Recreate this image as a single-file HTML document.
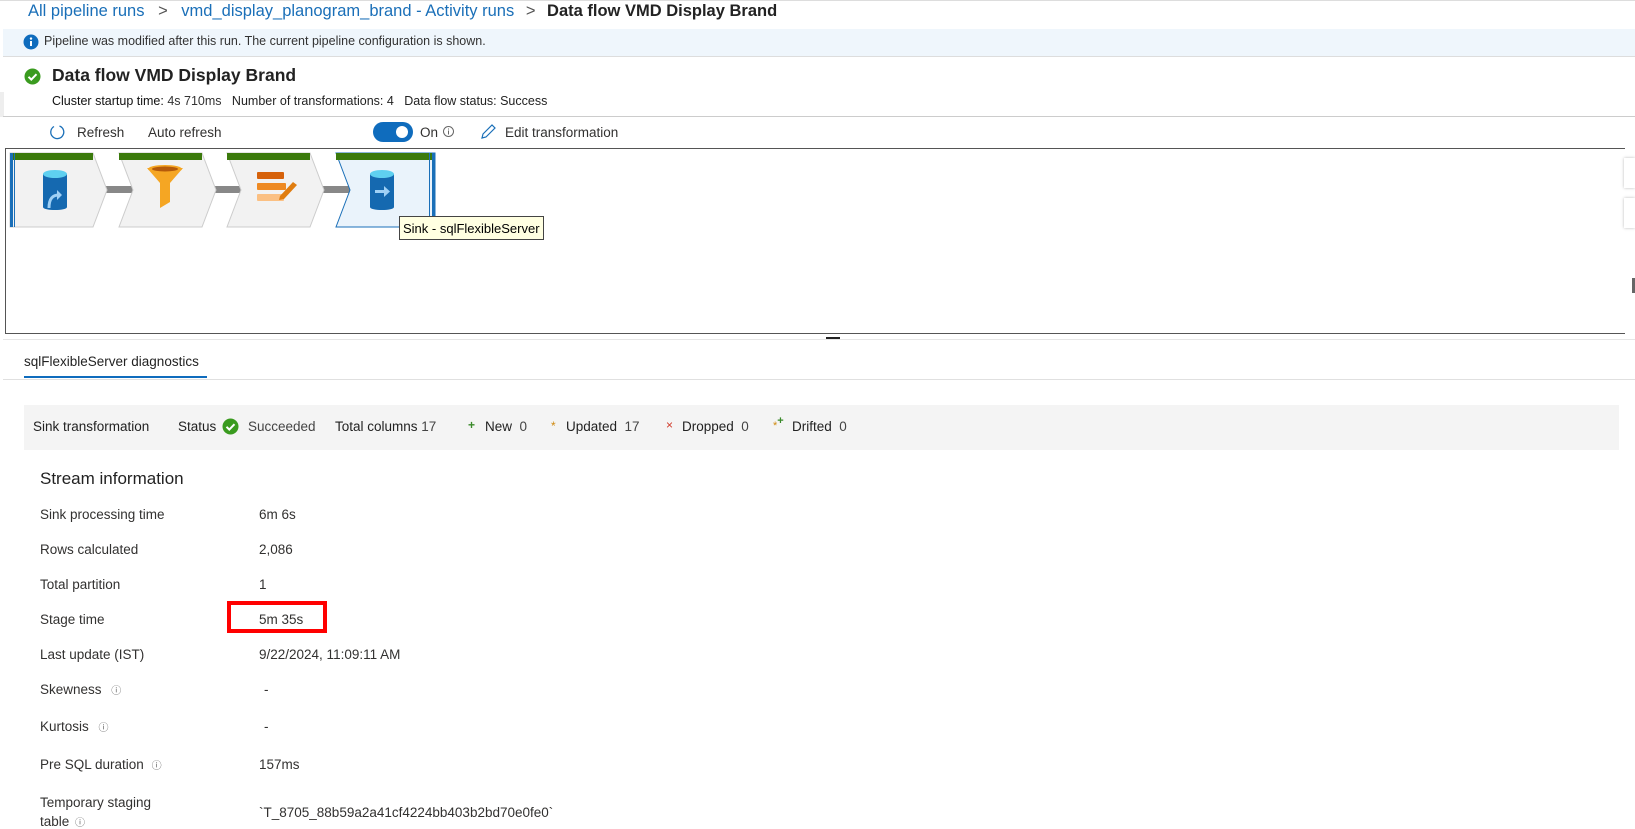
<!DOCTYPE html>
<html><head><meta charset="utf-8"><style>
*{margin:0;padding:0;box-sizing:border-box}
body{width:1635px;height:828px;overflow:hidden;background:#fff;font-family:"Liberation Sans","DejaVu Sans",sans-serif;color:#323130;position:relative}
.a{position:absolute;white-space:nowrap}
.lbl{position:absolute;left:40px;font-size:13.5px;color:#323130}
.val{position:absolute;left:259px;font-size:13.5px;color:#323130}
</style></head><body>
<div class="a" style="left:0;top:0;width:1635px;height:1px;background:#ddd"></div>
<div class="a" style="left:28px;top:2px;font-size:16.5px;color:#1a6fb8">All pipeline runs <span style="color:#555;margin:0 9px">&gt;</span> vmd_display_planogram_brand - Activity runs <span style="color:#555;margin:0 7px">&gt;</span> <span style="color:#222;font-weight:bold">Data flow VMD Display Brand</span></div>
<div class="a" style="left:3px;top:29px;width:1632px;height:27px;background:#eff6fc"></div>
<svg class="a" style="left:23px;top:34px" width="16" height="16"><circle cx="8" cy="8" r="7.5" fill="#0f6cbd"/><rect x="7" y="7" width="2" height="5" fill="#fff"/><circle cx="8" cy="4.6" r="1.2" fill="#fff"/></svg>
<div class="a" style="left:44px;top:34px;font-size:12.5px;color:#333">Pipeline was modified after this run. The current pipeline configuration is shown.</div>
<div class="a" style="left:3px;top:56px;width:1632px;height:1px;background:#ddd"></div>
<div class="a" style="left:0;top:92px;width:4px;height:25px;background:#eee"></div>
<svg class="a" style="left:24px;top:68px" width="17" height="17"><circle cx="8.5" cy="8.5" r="8" fill="#3a9b1f"/><path d="M4.5 8.8l2.8 2.8 5.2-5.4" stroke="#fff" stroke-width="2" fill="none"/></svg>
<div class="a" style="left:52px;top:65px;font-size:17.5px;font-weight:bold;color:#222">Data flow VMD Display Brand</div>
<div class="a" style="left:52px;top:94px;font-size:12.5px;color:#222"><b style="font-weight:normal;color:#111">Cluster startup time:</b><span style="color:#333"> 4s 710ms</span>&nbsp;&nbsp;&nbsp;Number of transformations: 4&nbsp;&nbsp;&nbsp;Data flow status: Success</div>
<div class="a" style="left:3px;top:116px;width:1632px;height:1px;background:#ccc"></div>
<svg class="a" style="left:49px;top:124px" width="16" height="16"><path d="M5 2.5A6.5 6.5 0 1 0 10.5 2" stroke="#1a6fb8" stroke-width="1.3" fill="none"/></svg>
<div class="a" style="left:77px;top:125px;font-size:13.5px">Refresh</div>
<div class="a" style="left:148px;top:125px;font-size:13.5px">Auto refresh</div>
<div class="a" style="left:373px;top:122px;width:40px;height:20px;border-radius:10px;background:#0f6cbd"></div>
<div class="a" style="left:396px;top:126px;width:12px;height:12px;border-radius:6px;background:#fff"></div>
<div class="a" style="left:420px;top:125px;font-size:13.5px">On</div>
<svg class="a" style="left:443px;top:126px" width="11" height="11"><circle cx="5.5" cy="5.5" r="5" stroke="#666" fill="none"/><rect x="5" y="4.5" width="1" height="4" fill="#666"/><rect x="5" y="2.5" width="1" height="1" fill="#666"/></svg>
<svg class="a" style="left:479px;top:123px" width="18" height="18"><path d="M3 15l1-4L13 2l3 3-9 9z" stroke="#1a6fb8" stroke-width="1.2" fill="none"/></svg>
<div class="a" style="left:505px;top:125px;font-size:13.5px">Edit transformation</div>
<div class="a" style="left:5px;top:148px;width:1620px;height:186px;border:1.5px solid #555;border-right:none"></div>
<svg class="a" style="left:6px;top:150px" width="440" height="85">
<rect x="99" y="36" width="30" height="7" fill="#888"/><rect x="208" y="36" width="30" height="7" fill="#888"/><rect x="317" y="36" width="30" height="7" fill="#888"/>
<path d="M4 3h83l14 37-14 37H4z" fill="#f2f2f2" stroke="#ccc"/>
<path d="M113 3h83l14 37-14 37h-83l14-37z" fill="#f2f2f2" stroke="#ccc"/>
<path d="M221 3h83l14 37-14 37h-83l14-37z" fill="#f2f2f2" stroke="#ccc"/>
<path d="M330 3h99v74h-99l14-37z" fill="#eaf3fb" stroke="#1a6fb8"/>
<rect x="4" y="3" width="83" height="7" fill="#3b7a0c"/><rect x="113" y="3" width="83" height="7" fill="#3b7a0c"/><rect x="221" y="3" width="83" height="7" fill="#3b7a0c"/><rect x="330" y="3" width="99" height="7" fill="#3b7a0c"/>
<rect x="4" y="3" width="3" height="74" fill="#1a6fb8"/><rect x="8" y="3" width="1" height="74" fill="#1a6fb8"/>
<rect x="426" y="3" width="3" height="74" fill="#1a6fb8"/><rect x="423" y="3" width="1" height="74" fill="#1a6fb8"/>
<path d="M37 24v33c0 4 24 4 24 0V24z" fill="#1569b0"/><ellipse cx="49" cy="24" rx="12" ry="4" fill="#5fd0f0"/>
<path d="M43 58c0-10 4-13 10-13" stroke="#9fd0f5" stroke-width="3" fill="none"/><path d="M51 40l5 5-5 5z" fill="#9fd0f5"/>
<path d="M141 18h36l-13 15v19l-10 6V33z" fill="#f5a623"/><ellipse cx="159" cy="19" rx="17" ry="4" fill="#f5a623"/><ellipse cx="159" cy="19" rx="13" ry="2.5" fill="#b55a0a"/>
<rect x="251" y="22" width="27" height="7" rx="1" fill="#d6620b"/><rect x="251" y="33" width="29" height="7" rx="1" fill="#ee8a23"/><rect x="251" y="44" width="27" height="7" rx="1" fill="#fbc083"/>
<path d="M274 46l13-14 4 3-13 14-5 1z" fill="#e07d10"/>
<path d="M364 24v33c0 4 24 4 24 0V24z" fill="#1569b0"/><ellipse cx="376" cy="24" rx="12" ry="4" fill="#5fd0f0"/>
<rect x="369" y="40" width="10" height="3" fill="#9fd0f5"/><path d="M378 36l6 5.5-6 5.5z" fill="#9fd0f5"/>
</svg>
<div class="a" style="left:399px;top:216px;width:145px;height:24px;background:#ffffe1;border:1px solid #444;font-size:13px;padding:4px 3px;color:#000">Sink - sqlFlexibleServer</div>
<div class="a" style="left:1624px;top:158px;width:11px;height:30px;background:#fff;box-shadow:0 0 3px #bbb"></div>
<div class="a" style="left:1624px;top:198px;width:11px;height:30px;background:#fff;box-shadow:0 0 3px #bbb"></div>
<div class="a" style="left:1632px;top:278px;width:4px;height:15px;border:2px solid #666"></div>
<div class="a" style="left:826px;top:337px;width:14px;height:2px;background:#222"></div>
<div class="a" style="left:3px;top:339px;width:1632px;height:1px;background:#e6e6e6"></div>
<div class="a" style="left:24px;top:354px;font-size:13.5px;color:#222">sqlFlexibleServer diagnostics</div>
<div class="a" style="left:24px;top:376px;width:183px;height:2px;background:#0f6cbd"></div>
<div class="a" style="left:3px;top:379px;width:1632px;height:1px;background:#e0e0e0"></div>
<div class="a" style="left:24px;top:405px;width:1595px;height:45px;background:#f4f4f4"></div>
<div class="a" style="left:33px;top:419px;font-size:13.5px;color:#222">Sink transformation</div>
<div class="a" style="left:178px;top:419px;font-size:13.5px;color:#222">Status</div>
<svg class="a" style="left:222px;top:418px" width="17" height="17"><circle cx="8.5" cy="8.5" r="8" fill="#3a9b1f"/><path d="M4.5 8.8l2.8 2.8 5.2-5.4" stroke="#fff" stroke-width="2" fill="none"/></svg>
<div class="a" style="left:248px;top:419px;font-size:13.5px;color:#444">Succeeded</div>
<div class="a" style="left:335px;top:419px;font-size:13.5px;color:#222">Total columns <span style="color:#444">17</span></div>
<div class="a" style="left:468px;top:418px;font-size:12px;color:#3a8a2a;font-weight:bold">+</div>
<div class="a" style="left:485px;top:419px;font-size:13.5px;color:#222">New <span style="color:#444">&nbsp;0</span></div>
<div class="a" style="left:551px;top:419px;font-size:12px;color:#d08a10">*</div>
<div class="a" style="left:566px;top:419px;font-size:13.5px;color:#222">Updated <span style="color:#444">&nbsp;17</span></div>
<div class="a" style="left:666px;top:418px;font-size:12px;color:#d03a2a">×</div>
<div class="a" style="left:682px;top:419px;font-size:13.5px;color:#222">Dropped <span style="color:#444">&nbsp;0</span></div>
<div class="a" style="left:773px;top:420px;font-size:11px;color:#d08a10">*<span style="color:#3a8a2a;font-weight:bold;position:relative;top:-5px">+</span></div>
<div class="a" style="left:792px;top:419px;font-size:13.5px;color:#222">Drifted <span style="color:#444">&nbsp;0</span></div>
<div class="a" style="left:40px;top:469px;font-size:17px;color:#222">Stream information</div>
<div class="lbl" style="top:507px">Sink processing time</div><div class="val" style="top:507px">6m 6s</div>
<div class="lbl" style="top:542px">Rows calculated</div><div class="val" style="top:542px">2,086</div>
<div class="lbl" style="top:577px">Total partition</div><div class="val" style="top:577px">1</div>
<div class="lbl" style="top:612px">Stage time</div><div class="val" style="top:612px">5m 35s</div>
<div class="a" style="left:227px;top:601px;width:100px;height:32px;border:4px solid #f00"></div>
<div class="lbl" style="top:647px">Last update (IST)</div><div class="val" style="top:647px">9/22/2024, 11:09:11 AM</div>
<div class="lbl" style="top:682px">Skewness <span style="font-size:10px;color:#666;margin-left:6px">ⓘ</span></div><div class="val" style="top:682px;left:264px">-</div>
<div class="lbl" style="top:719px">Kurtosis <span style="font-size:10px;color:#666;margin-left:6px">ⓘ</span></div><div class="val" style="top:719px;left:264px">-</div>
<div class="lbl" style="top:757px">Pre SQL duration <span style="font-size:10px;color:#666;margin-left:4px">ⓘ</span></div><div class="val" style="top:757px">157ms</div>
<div class="lbl" style="top:795px">Temporary staging</div>
<div class="lbl" style="top:814px">table <span style="font-size:10px;color:#666;margin-left:2px">ⓘ</span></div>
<div class="val" style="top:805px">`T_8705_88b59a2a41cf4224bb403b2bd70e0fe0`</div>
</body></html>
